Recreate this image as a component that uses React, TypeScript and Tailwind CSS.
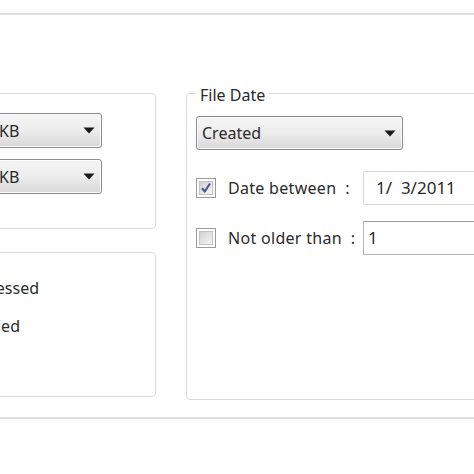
import React from "react";

function Arrow() {
  return (
    <svg width="12" height="7" viewBox="0 0 12 7" className="shrink-0">
      <path d="M0.5 0.5 L11.5 0.5 L6 6.5 Z" fill="#1a1a1a" />
    </svg>
  );
}

function Combo({ text, className }: { text: string; className: string }) {
  return (
    <div
      className={
        "flex items-center justify-between border border-[#8c8c8c] rounded-[3px] bg-gradient-to-b from-[#f6f6f6] via-[#ececec] to-[#d9d9d9] shadow-[inset_0_0_0_1px_#fbfbfb] pr-[6px] " +
        className
      }
    >
      <span className="leading-none">{text}</span>
      <Arrow />
    </div>
  );
}

function Check({ checked }: { checked: boolean }) {
  return (
    <div className="w-[20px] h-[20px] shrink-0 border border-[#9a9a9a] bg-white p-[2px]">
      <div className="w-full h-full border border-[#c2c2c2] bg-gradient-to-br from-[#d0d0d0] via-[#e4e4e4] to-[#f6f6f6] flex items-center justify-center">
        {checked && (
          <svg width="12" height="12" viewBox="0 0 12 12">
            <path
              d="M2 6.2 L4.8 9.5 L10 1.5"
              fill="none"
              stroke="#4a5a94"
              strokeWidth="2.2"
              strokeLinejoin="round"
            />
          </svg>
        )}
      </div>
    </div>
  );
}

export default function App() {
  return (
    <div className="w-[474px] h-[474px] bg-white overflow-hidden font-['Noto_Sans',sans-serif] text-[16px] text-[#2a2a2a]">
      <div className="pt-[13px]">
        <div className="h-[2px] bg-[#dedede]" />
      </div>
      <div className="flex mt-[66px] gap-[30px]">
        <div className="w-[156px] shrink-0 overflow-hidden mt-[12px]">
          <div className="-ml-[64px] w-[220px] flex flex-col gap-[23px]">
            <div className="h-[136px] border border-[#dadada] rounded-[4px] pt-[19px] flex flex-col gap-[11px]">
              <Combo text="KB" className="ml-[33px] w-[132px] h-[35px] pl-[28px]" />
              <Combo text="KB" className="ml-[33px] w-[132px] h-[35px] pl-[28px]" />
            </div>
            <div className="h-[145px] border border-[#dadada] rounded-[4px] pt-[23px] flex flex-col gap-[14px]">
              <div className="w-[102px] flex justify-end whitespace-nowrap leading-[24px]">Last accessed</div>
              <div className="w-[83px] flex justify-end whitespace-nowrap leading-[24px]">Last modified</div>
            </div>
          </div>
        </div>
        <fieldset className="w-[330px] shrink-0 h-[319px] border border-[#dadada] rounded-[4px] px-[9px]">
          <legend className="px-[4px] pt-[4px] leading-[20px]">File Date</legend>
          <Combo text="Created" className="mt-[11px] w-[207px] h-[34px] pl-[5px]" />
          <div className="mt-[21px] flex items-center h-[34px]">
            <Check checked />
            <span className="ml-[12px] w-[135px] shrink-0 whitespace-nowrap tracking-[0.3px]">Date between&nbsp; :</span>
            <div className="h-[34px] flex-1 border border-[#d6d6d6] rounded-[2px] flex items-center pl-[12px] text-[17px]">
              1/&nbsp; 3/2011
            </div>
          </div>
          <div className="mt-[16px] flex items-center h-[34px]">
            <Check checked={false} />
            <span className="ml-[12px] w-[135px] shrink-0 whitespace-nowrap tracking-[0.3px]">Not older than&nbsp; :</span>
            <div className="h-[34px] flex-1 border border-[#b5b5b5] border-t-[#9a9a9a] flex items-center pl-[4px] text-[17px]">
              1
            </div>
          </div>
        </fieldset>
      </div>
      <div className="mt-[17px] h-[2px] bg-[#dedede]" />
    </div>
  );
}
